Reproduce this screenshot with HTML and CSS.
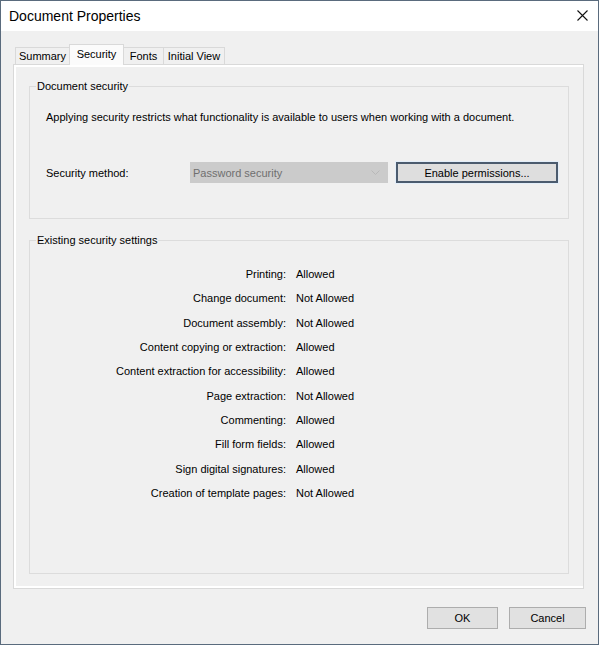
FILE: index.html
```html
<!DOCTYPE html>
<html lang="en">
<head>
<meta charset="utf-8">
<title>Document Properties</title>
<link rel="stylesheet" href="styles.css">
</head>
<body>
<div class="window">
  <div class="titlebar">
    <span class="title">Document Properties</span>
    <svg class="close" width="11" height="11" viewBox="0 0 11 11"><path d="M0.5 0.5 L10.5 10.5 M10.5 0.5 L0.5 10.5" stroke="#111" stroke-width="1.1" fill="none"/></svg>
  </div>
  <div class="content">
    <div class="tabs">
      <div class="tab t-summary">Summary</div>
      <div class="tab t-security active">Security</div>
      <div class="tab t-fonts">Fonts</div>
      <div class="tab t-initial">Initial View</div>
    </div>
    <div class="panel">
      <div class="group g-doc">
        <div class="group-title">Document security</div>
        <div class="desc">Applying security restricts what functionality is available to users when working with a document.</div>
        <div class="method-row">
          <div class="method-label">Security method:</div>
          <div class="select">
            <span>Password security</span>
            <svg class="arrow" width="9" height="5" viewBox="0 0 9 5"><path d="M0.5 0.5 L4.5 4.5 L8.5 0.5" stroke="#b8b8b8" stroke-width="1" fill="none"/></svg>
          </div>
          <div class="btn btn-default">Enable permissions...</div>
        </div>
      </div>
      <div class="group g-existing">
        <div class="group-title">Existing security settings</div>
        <div class="settings">
          <div class="k">Printing:</div><div class="v">Allowed</div>
          <div class="k">Change document:</div><div class="v">Not Allowed</div>
          <div class="k">Document assembly:</div><div class="v">Not Allowed</div>
          <div class="k">Content copying or extraction:</div><div class="v">Allowed</div>
          <div class="k">Content extraction for accessibility:</div><div class="v">Allowed</div>
          <div class="k">Page extraction:</div><div class="v">Not Allowed</div>
          <div class="k">Commenting:</div><div class="v">Allowed</div>
          <div class="k">Fill form fields:</div><div class="v">Allowed</div>
          <div class="k">Sign digital signatures:</div><div class="v">Allowed</div>
          <div class="k">Creation of template pages:</div><div class="v">Not Allowed</div>
        </div>
      </div>
    </div>
  </div>
  <div class="footer">
    <div class="btn btn-ok">OK</div>
    <div class="btn btn-cancel">Cancel</div>
  </div>
</div>
</body>
</html>
```
FILE: styles.css
```css
* { box-sizing: border-box; }
html, body { margin: 0; padding: 0; }
body {
  width: 599px;
  height: 645px;
  font-family: "Liberation Sans", Arial, sans-serif;
  font-size: 11px;
  color: #000;
  background: #f0f0f0;
  overflow: hidden;
}
.window {
  width: 599px;
  height: 645px;
  border: 1px solid #5a6b7d;
  display: flex;
  flex-direction: column;
  background: #f0f0f0;
}
.titlebar {
  height: 30px;
  flex: none;
  background: #fff;
  display: flex;
  align-items: center;
  justify-content: space-between;
  padding: 0 10px 0 8px;
}
.title {
  font-size: 14px;
  color: #000;
  line-height: 16px;
}
.close { display: block; margin-top: -1px; }
.content {
  flex: 1;
  display: flex;
  flex-direction: column;
  padding: 13px 14px 0 12px;
}
.tabs {
  height: 20px;
  flex: none;
  display: flex;
  align-items: flex-end;
  padding-left: 2px;
}
.tab {
  height: 17px;
  border: 1px solid #d9d9d9;
  border-bottom: 0;
  line-height: 16px;
  text-align: center;
  background: #f0f0f0;
  white-space: nowrap;
}
.tab + .tab { margin-left: -1px; }
.t-summary { width: 55px; }
.t-security { width: 55px; }
.t-fonts { width: 41px; }
.t-initial { width: 62px; }
.tab.active {
  height: 21px;
  margin-bottom: -1px;
  background: #fbfbfb;
  line-height: 18px;
  position: relative;
  z-index: 1;
}
.panel {
  flex: 1;
  display: flex;
  flex-direction: column;
  border: 1px solid #d9d9d9;
  background: #f0f0f0;
  box-shadow: inset 2px 2px 0 #fff, inset 0 -2px 0 #fff;
  padding: 21px 14px 14px 15px;
}
.group {
  border: 1px solid #dcdcdc;
  display: flex;
  flex-direction: column;
}
.group-title {
  margin: -8px 0 0 6px;
  padding: 0 1px;
  line-height: 14px;
  height: 14px;
  background: #f0f0f0;
  align-self: flex-start;
}
.g-doc { padding-bottom: 35px; }
.desc {
  margin: 17px 0 0 16px;
  line-height: 14px;
}
.method-row {
  margin: 38px 0 0 16px;
  display: flex;
  align-items: center;
  height: 21px;
}
.method-label { width: 144px; line-height: 14px; }
.select {
  width: 198px;
  height: 21px;
  background: #cbcbcb;
  color: #6f6f6f;
  display: flex;
  align-items: center;
  justify-content: space-between;
  padding: 0 8px 0 3px;
}
.btn {
  display: flex;
  align-items: center;
  justify-content: center;
  background: #e1e1e1;
  border: 1px solid #adadad;
  line-height: 14px;
}
.btn-default {
  margin-left: 8px;
  width: 162px;
  height: 21px;
  border: 2px solid #4b5b6e;
  background: #dedede;
  box-shadow: 0 0 0 1px #e3eef9;
}
.g-existing {
  margin-top: 21px;
  flex: 1;
}
.settings {
  margin-top: 15px;
  display: grid;
  grid-template-columns: 256px 1fr;
  grid-auto-rows: 24.3px;
  column-gap: 10px;
  align-items: center;
  line-height: 14px;
}
.k { text-align: right; white-space: nowrap; }
.v { white-space: nowrap; }
.footer {
  flex: none;
  display: flex;
  justify-content: flex-end;
  gap: 11px;
  padding: 18px 12px 15px;
}
.btn-ok { width: 71px; height: 22px; }
.btn-cancel { width: 77px; height: 22px; }
```
